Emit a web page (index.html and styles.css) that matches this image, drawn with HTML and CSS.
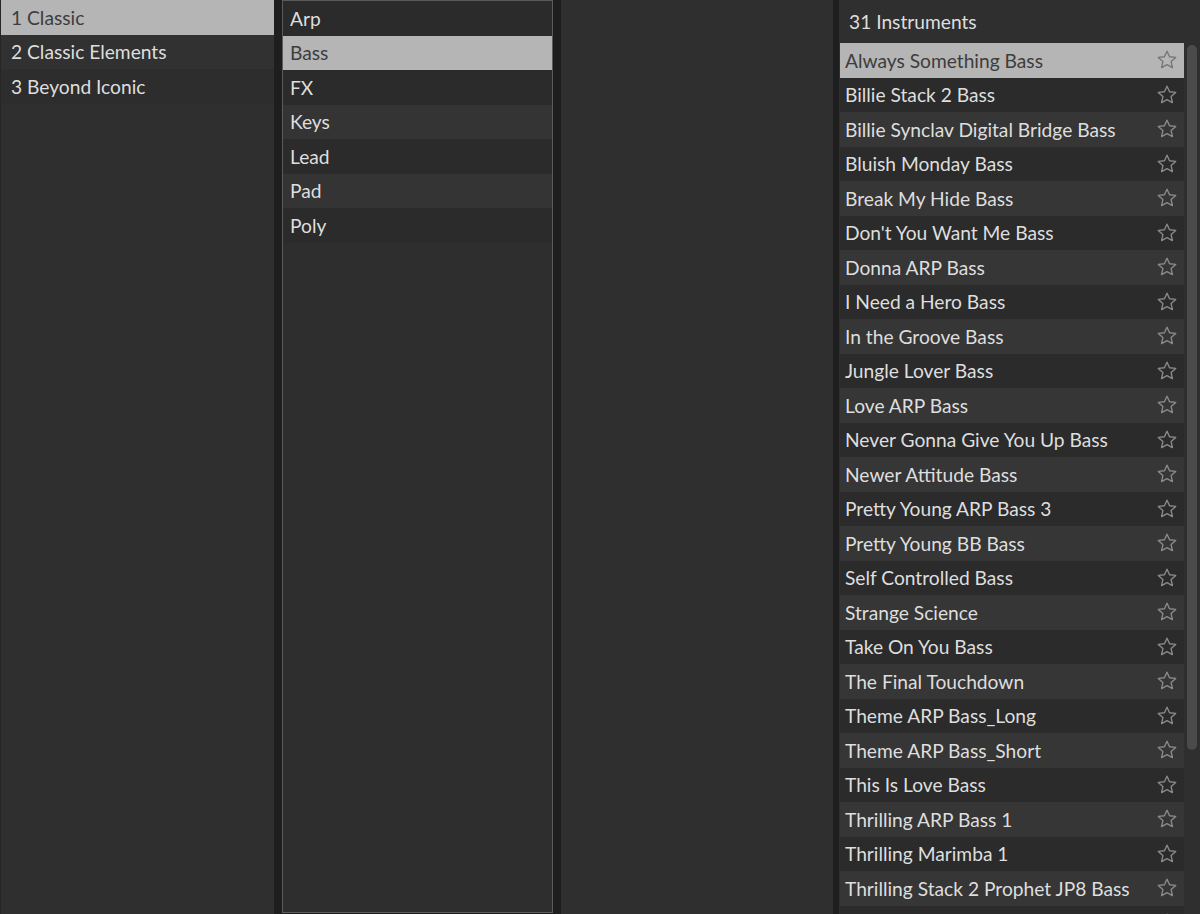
FILE: index.html
```html
<!DOCTYPE html>
<html>
<head>
<meta charset="utf-8">
<link rel="stylesheet" href="styles.css">
</head>
<body>
<div class="app">
  <div class="panel left">
    <div class="row sel">1 Classic</div>
    <div class="row alt">2 Classic Elements</div>
    <div class="row">3 Beyond Iconic</div>
  </div>
  <div class="panel mid">
    <div class="row">Arp</div>
    <div class="row sel">Bass</div>
    <div class="row">FX</div>
    <div class="row alt">Keys</div>
    <div class="row">Lead</div>
    <div class="row alt">Pad</div>
    <div class="row">Poly</div>
  </div>
  <div class="panel empty"></div>
  <div class="panel right">
    <div class="header">31 Instruments</div>
    <div class="body">
      <div class="list" id="list"></div>
      <div class="track"><div class="thumb"></div></div>
    </div>
  </div>
</div>
<script src="app.js"></script>
</body>
</html>
```

FILE: app.js
```js
var names = ["Always Something Bass","Billie Stack 2 Bass","Billie Synclav Digital Bridge Bass","Bluish Monday Bass","Break My Hide Bass","Don't You Want Me Bass","Donna ARP Bass","I Need a Hero Bass","In the Groove Bass","Jungle Lover Bass","Love ARP Bass","Never Gonna Give You Up Bass","Newer Attitude Bass","Pretty Young ARP Bass 3","Pretty Young BB Bass","Self Controlled Bass","Strange Science","Take On You Bass","The Final Touchdown","Theme ARP Bass_Long","Theme ARP Bass_Short","This Is Love Bass","Thrilling ARP Bass 1","Thrilling Marimba 1","Thrilling Stack 2 Prophet JP8 Bass","Thrilling Stack Bass","Tom Sawyer Bass","Tour Bass","Voices Bass","Walk Away Bass","Working Bass"];
var star = '<svg class="star" viewBox="0 0 24 24" width="22" height="22"><path d="M12 2.4l2.8 6.1 6.7.7-5 4.5 1.4 6.6L12 17l-5.9 3.3 1.4-6.6-5-4.5 6.7-.7z" fill="none" stroke="currentColor" stroke-width="1.5" stroke-linejoin="round"/></svg>';
var list = document.getElementById('list');
var html = '';
names.forEach(function (n, i) {
  var cls = 'item';
  if (i === 0) cls += ' sel';
  else if (i % 2 === 0) cls += ' alt';
  html += '<div class="' + cls + '"><span class="name"></span>' + star + '</div>';
});
list.innerHTML = html;
var spans = list.querySelectorAll('.name');
names.forEach(function (n, i) { spans[i].textContent = n; });
```

FILE: styles.css
```css
html, body {
  margin: 0;
  padding: 0;
  background: #1e1e1e;
  height: 914px;
  overflow: hidden;
}
body {
  font-family: "Lato", "Noto Sans", sans-serif;
  font-size: 19.2px;
  color: #dedede;
}
.app {
  display: flex;
  height: 914px;
}
.panel {
  background: #2f2f2f;
  height: 914px;
  box-sizing: border-box;
  overflow: hidden;
  flex-shrink: 0;
}
.left {
  width: 274px;
  border-left: 1px solid #262626;
}
.mid {
  width: 271px;
  margin-left: 8px;
  height: 913px;
  border: 1px solid #5b5b5b;
  background: #2e2e2e;
}
.empty {
  width: 272px;
  margin-left: 8px;
  background: #2f2f2f;
}
.right {
  width: 361px;
  margin-left: 6px;
  background: #2f2f2f;
  display: flex;
  flex-direction: column;
}
.row {
  height: 34.5px;
  display: flex;
  align-items: center;
  padding-left: 10px;
  background: #2d2d2d;
  white-space: nowrap;
}
.mid .row {
  padding-left: 7px;
  background: #2b2b2b;
}
.mid .row.alt, .row.alt {
  background: #343434;
}
.left .row.alt {
  background: #313131;
}
.row.sel, .mid .row.sel, .item.sel {
  background: #b5b5b5;
  color: #3d3d3d;
}
.header {
  height: 43px;
  flex-shrink: 0;
  display: flex;
  align-items: center;
  padding-left: 10px;
  box-sizing: border-box;
  padding-bottom: 1px;
}
.body {
  display: flex;
  flex: 1;
  min-height: 0;
  padding-left: 1px;
}
.list {
  width: 344px;
  flex-shrink: 0;
}
.item {
  height: 34.5px;
  display: flex;
  align-items: center;
  justify-content: space-between;
  padding-left: 5px;
  padding-right: 6px;
  background: #2b2b2b;
  white-space: nowrap;
}
.item.alt {
  background: #363636;
}
.star {
  color: #8a8a8a;
  display: block;
}
.item.sel .star {
  color: #767676;
}
.track {
  width: 16px;
  display: flex;
  justify-content: center;
  align-items: flex-start;
  padding-top: 2px;
}
.thumb {
  width: 10px;
  height: 705px;
  border-radius: 5px;
  background: #4b4b4b;
}
```
